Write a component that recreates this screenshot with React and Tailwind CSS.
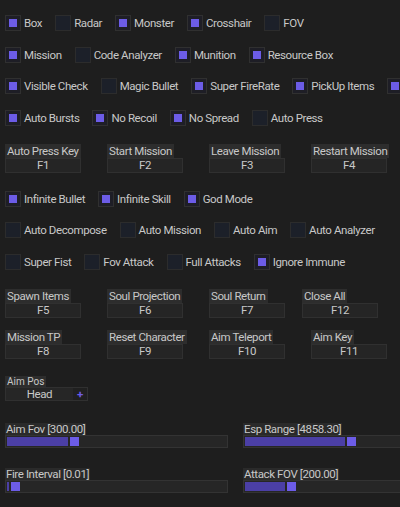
import React from "react";

const rowsA = [
  [["Box", true], ["Radar", false], ["Monster", true], ["Crosshair", true], ["FOV", false]],
  [["Mission", true], ["Code Analyzer", false], ["Munition", true], ["Resource Box", true]],
  [["Visible Check", true], ["Magic Bullet", false], ["Super FireRate", true], ["PickUp Items", true], ["", true]],
  [["Auto Bursts", true], ["No Recoil", true], ["No Spread", true], ["Auto Press", false]],
];

const rowsB = [
  [["Infinite Bullet", true], ["Infinite Skill", true], ["God Mode", true]],
  [["Auto Decompose", false], ["Auto Mission", false], ["Auto Aim", false], ["Auto Analyzer", false]],
  [["Super Fist", false], ["Fov Attack", false], ["Full Attacks", false], ["Ignore Immune", true]],
];

function Check({ label, on }) {
  return (
    <div className="flex items-center shrink-0">
      <div
        className={
          "w-4 h-4 border flex items-center justify-center " +
          (on ? "bg-[#1e1e26] border-[#303030]" : "bg-[#1c2029] border-[#2c2c2c]")
        }
      >
        {on && <div className="w-2 h-2 bg-[#6c5ce7]" />}
      </div>
      {label && <span className="ml-[3px] leading-4">{label}</span>}
    </div>
  );
}

function CheckRows({ rows }) {
  return (
    <div className="flex flex-col gap-[15.5px]">
      {rows.map((row, i) => (
        <div key={i} className="flex gap-x-[13px] h-4 whitespace-nowrap">
          {row.map(([l, on], j) => (
            <Check key={j} label={l} on={on} />
          ))}
        </div>
      ))}
    </div>
  );
}

function Bind({ label, keyName, width = "w-[102px]" }) {
  return (
    <div className={"flex flex-col items-start shrink-0 " + width}>
      <span className="bg-[#2d2d2d] px-[2px] h-[14px] leading-[14px] whitespace-nowrap">{label}</span>
      <div className="w-[76px] h-[15px] bg-[#252525] border border-[#303030] text-center leading-[13px]">
        {keyName}
      </div>
    </div>
  );
}

function Slider({ label, fill }) {
  return (
    <div className="flex flex-col items-start w-[223px] shrink-0">
      <span className="bg-[#2a2a2a] px-[1px] h-[12px] leading-[12px] whitespace-nowrap">{label}</span>
      <div className="w-full h-[13px] bg-[#262626] border border-[#333333] flex items-stretch p-[1px]">
        <div className="bg-[#4b3fa6]" style={{ width: fill }} />
        <div className="w-[9px] ml-[2px] bg-[#6c5ce7]" />
      </div>
    </div>
  );
}

export default function App() {
  return (
    <div
      className="w-[400px] h-[507px] overflow-hidden bg-[#1e1e1e] text-[#c8c8c8] text-[11.5px] tracking-[-0.4px] px-[5px] pt-[15px]"
      style={{ fontFamily: "Roboto, 'Liberation Sans', sans-serif" }}
    >
      <CheckRows rows={rowsA} />

      <div className="flex mt-[18px]">
        <Bind label="Auto Press Key" keyName="F1" />
        <Bind label="Start Mission" keyName="F2" />
        <Bind label="Leave Mission" keyName="F3" />
        <Bind label="Restart Mission" keyName="F4" />
      </div>

      <div className="mt-[18px]">
        <CheckRows rows={rowsB} />
      </div>

      <div className="flex mt-[19px]">
        <Bind label="Spawn Items" keyName="F5" />
        <Bind label="Soul Projection" keyName="F6" />
        <Bind label="Soul Return" keyName="F7" width="w-[93px]" />
        <Bind label="Close All" keyName="F12" />
      </div>

      <div className="flex mt-[12px]">
        <Bind label="Mission TP" keyName="F8" />
        <Bind label="Reset Character" keyName="F9" />
        <Bind label="Aim Teleport" keyName="F10" />
        <Bind label="Aim Key" keyName="F11" />
      </div>

      <div className="flex flex-col items-start mt-[17px]">
        <span className="bg-[#2d2d2d] px-[2px] h-[11px] leading-[11px] text-[10px] tracking-normal">Aim Pos</span>
        <div className="w-[83px] h-[14px] bg-[#262626] border border-[#303030] flex">
          <div className="flex-1 text-center leading-[12px]">Head</div>
          <div className="w-[14px] bg-[#202020] text-[#6c5ce7] text-center leading-[12px] font-bold">+</div>
        </div>
      </div>

      <div className="flex gap-[15px] mt-[22px]">
        <Slider label="Aim Fov [300.00]" fill={61} />
        <Slider label="Esp Range [4858.30]" fill={100} />
      </div>

      <div className="flex gap-[15px] mt-[20px]">
        <Slider label="Fire Interval [0.01]" fill={2} />
        <Slider label="Attack FOV [200.00]" fill={40} />
      </div>
    </div>
  );
}
